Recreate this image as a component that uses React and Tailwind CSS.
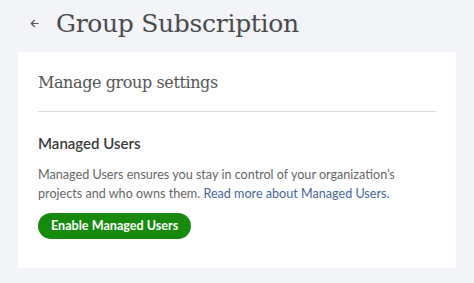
export default function App() {
  return (
    <div className="w-[474px] h-[283px] bg-[#f3f4f8] overflow-hidden">
      <div className="flex items-center h-[46px] pl-[29px] pt-[1px]">
        <svg width="11" height="11" viewBox="0 0 12 12" className="text-[#555]">
          <path d="M10 6H2.5M6 2.5L2.5 6L6 9.5" fill="none" stroke="currentColor" strokeWidth="1.3" strokeLinecap="round" strokeLinejoin="round" />
        </svg>
        <h1 className="ml-[16px] text-[25px] leading-none text-[#4a4a4d] font-['DejaVu_Serif',serif] tracking-[-0.3px]">
          Group Subscription
        </h1>
      </div>
      <div className="mt-[6px] mx-[18px] bg-white px-[20px] pt-[20px] h-[216px]">
        <div className="text-[16px] leading-[22px] text-[#555] font-['DejaVu_Serif',serif] tracking-[-0.4px]">
          Manage group settings
        </div>
        <div className="mt-[17px] h-px bg-[#dcdcdc]" />
        <div className="mt-[21px] text-[15px] leading-[20px] font-semibold text-[#3a3a3a] font-['Lato',sans-serif]">
          Managed Users
        </div>
        <p className="mt-[12px] text-[12.6px] leading-[19px] text-[#666] font-['Lato',sans-serif]">
          Managed Users ensures you stay in control of your organization’s projects and who owns them.{" "}
          <span className="text-[#46679b]">Read more about Managed Users.</span>
        </p>
        <button className="mt-[10px] h-[26px] px-[13px] rounded-full bg-[#158a0c] text-white text-[12.6px] font-bold font-['Lato',sans-serif] leading-none">
          Enable Managed Users
        </button>
      </div>
    </div>
  );
}
